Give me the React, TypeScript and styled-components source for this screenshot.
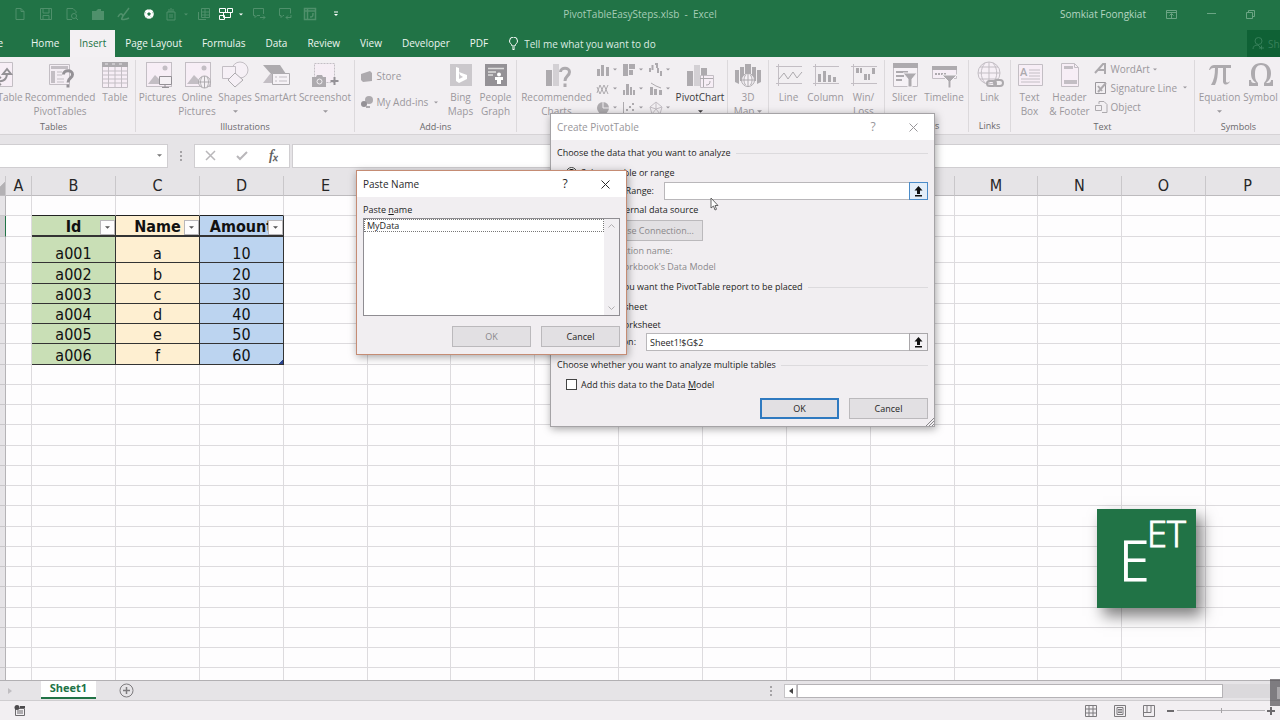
import React, { ReactNode } from 'react';
import styled, { createGlobalStyle, css } from 'styled-components';

const GREEN = '#217346';
const UI = "'Open Sans', 'Noto Sans', sans-serif";
const CELL = "'DejaVu Sans Condensed', 'DejaVu Sans', sans-serif";
const L = '#c3bec4';
const M = '#adaaae';
const D = '#949196';

const Global = createGlobalStyle`
  * { box-sizing: border-box; }
  body { margin: 0; background: #fff; font: 10px/14px ${UI}; color: #262626; overflow: hidden; }
  button, input { font: inherit; color: inherit; border: 0; margin: 0; padding: 0; background: none; }
  button { cursor: default; }
  svg { display: block; flex: none; }
`;

const Window = styled.div`
  position: relative;
  display: flex;
  flex-direction: column;
  height: 100vh;
  overflow: hidden;
`;

/* ---------- title bar and tabs ---------- */

const TitleBar = styled.header`
  display: grid;
  grid-template-columns: 1fr auto 1fr;
  align-items: center;
  height: 30px;
  padding-bottom: 2px;
  background: ${GREEN};
  color: #a6cdb6;
`;

const QuickAccess = styled.div`
  display: flex;
  padding-left: 7px;
`;

const QuickButton = styled.button<{ $w: number; $bright?: boolean }>`
  display: flex;
  justify-content: center;
  align-items: center;
  width: ${(p) => p.$w}px;
  height: 20px;
  color: ${(p) => (p.$bright ? '#fff' : '#4f906b')};
`;

const WindowTools = styled.div`
  display: flex;
  justify-content: flex-end;
  align-items: center;
  gap: 30px;
  padding-right: 25px;
  color: #6ba584;
`;

const UserName = styled.span`
  color: #b4d6c2;
  margin-right: -10px;
`;

const TabStrip = styled.nav`
  display: flex;
  height: 27px;
  background: ${GREEN};
  color: #eef6f1;
`;

const Tab = styled.button<{ $active?: boolean }>`
  padding: 0 10px 2px;
  height: 27px;
  ${(p) => p.$active && css`
    margin-left: 1px;
    padding: 0 9px 2px;
    background: #f3f0f3;
    color: ${GREEN};
  `}
`;

const FileTab = styled.button`
  display: flex;
  justify-content: flex-end;
  align-items: center;
  width: 21px;
  padding: 0 18px 2px 0;
  overflow: hidden;
`;

const TellMe = styled.label`
  display: flex;
  align-items: center;
  gap: 6px;
  margin-left: 11px;
  flex: 1;
  input { width: 160px; }
  input::placeholder { color: #dcebe2; opacity: 1; }
`;

const Share = styled.button`
  display: flex;
  align-items: center;
  gap: 4px;
  width: 33px;
  padding-left: 5px;
  overflow: hidden;
  background: #0f6135;
  color: #37805a;
`;

/* ---------- ribbon ---------- */

const Ribbon = styled.section`
  display: flex;
  height: 78px;
  margin-left: -28px;
  background: #f2eff2;
  border-bottom: 1px solid #d6d3d6;
  overflow: hidden;
  color: #9b989d;
`;

const Group = styled.div<{ $w: number }>`
  display: flex;
  flex-direction: column;
  flex: none;
  width: ${(p) => p.$w}px;
  margin: 3px 0 2px;
  border-right: 1px solid #dcd9dc;
`;

const GroupItems = styled.div`
  display: flex;
  justify-content: center;
  height: 60px;
`;

const GroupName = styled.div`
  padding-top: 2px;
  font-size: 9px;
  line-height: 13px;
  text-align: center;
  color: #6b696c;
`;

const Big = styled.button<{ $w: number; $dark?: boolean }>`
  display: flex;
  flex-direction: column;
  align-items: center;
  flex: none;
  width: ${(p) => p.$w}px;
  line-height: 14px;
  white-space: nowrap;
  svg { margin: 1px 0; }
  color: ${(p) => (p.$dark ? '#3b3a3c' : 'inherit')};
`;

const CaretLine = styled.span`
  display: flex;
  align-items: center;
  gap: 3px;
  height: 14px;
  svg { margin: 0; }
`;

const Stack = styled.div<{ $w: number; $top: number }>`
  display: flex;
  flex-direction: column;
  flex: none;
  width: ${(p) => p.$w}px;
  padding: ${(p) => p.$top}px 0 0 2px;
`;

const Small = styled.button<{ $h: number }>`
  display: flex;
  align-items: center;
  gap: 3px;
  height: ${(p) => p.$h}px;
  white-space: nowrap;
`;

const ChartGrid = styled.div`
  display: grid;
  grid-template-columns: 26px 27px 26px;
  grid-auto-rows: 19px;
  padding-left: 2px;
`;

const MiniButton = styled.button`
  display: flex;
  align-items: center;
  gap: 3px;
`;

/* ---------- formula bar ---------- */

const FormulaBar = styled.section`
  display: flex;
  align-items: center;
  height: 41px;
  background: #e6e4e7;
`;

const NameBox = styled.div`
  display: flex;
  align-items: center;
  width: 168px;
  height: 24px;
  background: #fff;
  border: 1px solid #d0ced1;
  border-left: 0;
  input { flex: 1; min-width: 0; outline: 0; }
  button { width: 16px; display: flex; justify-content: center; color: #777; }
`;

const Grip = styled.div`
  display: flex;
  justify-content: center;
  width: 26px;
`;

const FormulaButtons = styled.div`
  display: flex;
  width: 96px;
  height: 24px;
  background: #fff;
  border: 1px solid #d0ced1;
  button { flex: 1; display: flex; justify-content: center; align-items: center; }
`;

const FormulaInput = styled.input`
  flex: 1;
  height: 24px;
  margin-left: 2px;
  background: #fff;
  border: 1px solid #d0ced1;
  border-right: 0;
`;

/* ---------- sheet ---------- */

const SheetArea = styled.main`
  flex: 1;
  min-height: 0;
  overflow: hidden;
  background: #fefdfe;
`;

const Sheet = styled.table`
  width: 1290px;
  table-layout: fixed;
  border-collapse: separate;
  border-spacing: 0;
  font: 16px/18px ${CELL};
  color: #111;
`;

const Col = styled.col<{ $w: number }>`
  width: ${(p) => p.$w}px;
`;

const ColumnName = styled.th`
  height: 20px;
  padding: 1px 0 0;
  font-weight: 400;
  color: #262626;
  background: #e6e4e7;
  border-right: 1px solid #c9c7ca;
  border-bottom: 1px solid #bdbbbe;
`;

const Corner = styled(ColumnName)`
  background: linear-gradient(135deg, #e6e4e7 45%, #b3b1b4 46%);
`;

const RowHead = styled.th<{ $selected?: boolean }>`
  padding: 0;
  background: ${(p) => (p.$selected ? '#d2d0d3' : '#e6e4e7')};
  border-right: 1px solid ${(p) => (p.$selected ? GREEN : '#b5b3b6')};
  border-bottom: 1px solid #c9c7ca;
`;

const Row = styled.tr<{ $h: number }>`
  height: ${(p) => p.$h}px;
`;

const Cell = styled.td<{ $fill?: string; $header?: boolean; $above?: boolean }>`
  position: relative;
  padding: 0;
  text-align: center;
  vertical-align: bottom;
  white-space: nowrap;
  overflow: hidden;
  line-height: 17px;
  border-right: 1px solid #dddbde;
  border-bottom: 1px solid #dddbde;
  ${(p) => p.$above && css`border-bottom-color: #222;`}
  ${(p) => p.$fill && css`
    background: ${p.$fill};
    border-right-color: #333;
    border-bottom-color: #333;
  `}
  ${(p) => p.$header && css`
    padding-top: 2px;
    font-weight: 700;
    vertical-align: middle;
    border-bottom: 2px solid #333;
  `}
`;

const FilterButton = styled.button`
  position: absolute;
  right: 0;
  bottom: 0;
  display: flex;
  justify-content: center;
  align-items: center;
  width: 15px;
  height: 15px;
  background: #fdfcfd;
  border: 1px solid #b9b7ba;
  color: #555;
`;

const RangeHandle = styled.i`
  position: absolute;
  right: 0;
  bottom: 0;
  width: 4px;
  height: 4px;
  background: linear-gradient(135deg, transparent 45%, #2b4590 46%);
`;

/* ---------- bottom bars ---------- */

const SheetTabs = styled.div`
  display: flex;
  align-items: center;
  height: 21px;
  background: #e6e4e7;
  border-top: 1px solid #b2b0b3;
  border-bottom: 1px solid #cfcdd0;
`;

const Arrow = styled.button`
  width: 41px;
  padding-left: 8px;
  color: #c0bec1;
`;

const SheetTab = styled.button`
  align-self: flex-start;
  width: 55px;
  height: 18px;
  padding-bottom: 3px;
  background: #fff;
  border-bottom: 2px solid ${GREEN};
  font-size: 11px;
  line-height: 13px;
  font-weight: 700;
  color: ${GREEN};
`;

const AddSheet = styled.button`
  margin-left: 23px;
  flex: 1;
`;

const ScrollBar = styled.div`
  display: flex;
  align-items: center;
  width: 486px;
  height: 14px;
  background: #dbd9dc;
`;

const ScrollLeft = styled.button`
  display: flex;
  justify-content: center;
  align-items: center;
  width: 13px;
  height: 14px;
  background: #fff;
  border: 1px solid #c5c3c6;
`;

const ScrollThumb = styled.div`
  width: 426px;
  height: 14px;
  background: #fff;
  border: 1px solid #b5b3b6;
`;

const TabsEnd = styled.div`
  width: 10px;
`;

const StatusBar = styled.footer`
  display: flex;
  align-items: center;
  height: 19px;
  padding: 0 5px 0 14px;
  background: #f2eff2;
`;

const Spacer = styled.div`
  flex: 1;
`;

const Views = styled.div`
  display: flex;
  gap: 17px;
  margin-right: 12px;
`;

const ZoomRange = styled.input`
  appearance: none;
  width: 88px;
  height: 11px;
  margin: 0 2px;
  background:
    linear-gradient(#a5a3a6, #a5a3a6) center / 1px 5px no-repeat,
    linear-gradient(#b5b3b6, #b5b3b6) center / 100% 1px no-repeat;
  &::-webkit-slider-thumb { appearance: none; width: 1px; height: 5px; }
`;

/* ---------- dialogs ---------- */

const DialogBox = styled.section<{ $active?: boolean }>`
  position: absolute;
  background: #f1eef1;
  border: 1px solid ${(p) => (p.$active ? '#c58c74' : '#a5a3a6')};
  box-shadow: 1px 2px 8px rgba(0, 0, 0, 0.35);
  font-size: 9px;
  line-height: 12px;
  color: #1e1e1e;
`;

const CreateDialog = styled(DialogBox)`
  left: 550px;
  top: 113px;
  width: 385px;
`;

const PasteDialog = styled(DialogBox)`
  left: 356px;
  top: 170px;
  width: 271px;
`;

const DialogTitle = styled.header<{ $muted?: boolean }>`
  display: flex;
  align-items: center;
  height: 26px;
  padding: 0 1px 0 6px;
  background: #fff;
  font-size: 10px;
  color: ${(p) => (p.$muted ? '#98969a' : '#2a2a2a')};
  h2 { flex: 1; margin: 0; font-size: 10px; font-weight: 400; }
`;

const TitleButton = styled.button`
  display: flex;
  justify-content: center;
  width: 40px;
  font-size: 12px;
`;

const CreateBody = styled.form`
  padding: 3px 6px 7px;
`;

const Section = styled.div<{ $gap?: number }>`
  display: flex;
  align-items: center;
  gap: 5px;
  height: 20px;
  margin-top: ${(p) => p.$gap || 0}px;
  white-space: nowrap;
  &::after { content: ''; flex: 1; height: 1px; background: #dcdadd; }
`;

const Choice = styled.label<{ $h: number; $muted?: boolean }>`
  display: flex;
  align-items: center;
  gap: 4px;
  height: ${(p) => p.$h}px;
  padding-left: 9px;
  color: ${(p) => (p.$muted ? '#8a888b' : 'inherit')};
`;

const Radio = styled.input`
  appearance: none;
  width: 11px;
  height: 11px;
  border: 1px solid #444;
  border-radius: 50%;
  background: #fff;
  &:checked { background: radial-gradient(#111 3px, #fff 4px); }
`;

const Check = styled.input`
  appearance: none;
  width: 11px;
  height: 11px;
  border: 1px solid #444;
  background: #fff;
`;

const Field = styled.div<{ $label: number }>`
  display: flex;
  align-items: center;
  height: 18px;
  label { width: ${(p) => p.$label}px; text-align: right; }
  input {
    flex: 1;
    min-width: 0;
    height: 18px;
    margin-left: 10px;
    padding-left: 3px;
    background: #fff;
    border: 1px solid #b9b7ba;
    border-right: 0;
    outline: 0;
  }
`;

const PickButton = styled.button<{ $focus?: boolean }>`
  display: flex;
  justify-content: center;
  align-items: center;
  width: 19px;
  height: 18px;
  background: ${(p) => (p.$focus ? '#e3eef9' : '#f3f1f4')};
  border: 1px solid ${(p) => (p.$focus ? '#4b8cc9' : '#a9a7aa')};
`;

const PushButton = styled.button<{ $primary?: boolean; $w?: number }>`
  width: ${(p) => p.$w || 79}px;
  height: 21px;
  background: #e2e0e3;
  border: ${(p) => (p.$primary ? '2px solid #2f7ac0' : '1px solid #bbb9bc')};
  &:disabled { color: #8a888b; }
`;

const ConnectionRow = styled.div`
  display: flex;
  padding: 0 0 0 39px;
`;

const ConnectionName = styled.div`
  height: 17px;
  padding: 4px 0 0 39px;
  color: #8a888b;
`;

const Actions = styled.div<{ $gap: number }>`
  display: flex;
  justify-content: flex-end;
  gap: 10px;
  margin-top: ${(p) => p.$gap}px;
`;

const Resize = styled.svg`
  position: absolute;
  right: 0;
  bottom: 0;
`;

const PasteBody = styled.div`
  padding: 7px 6px;
`;

const ListBox = styled.div`
  display: flex;
  height: 98px;
  margin-top: 2px;
  background: #fff;
  border: 1px solid #8f8d92;
`;

const Options = styled.ul`
  flex: 1;
  margin: 0;
  padding: 0;
  list-style: none;
  li { height: 13px; padding-left: 2px; line-height: 11px; border: 1px dotted #777; }
`;

const ListScroll = styled.div`
  display: flex;
  flex-direction: column;
  justify-content: space-between;
  align-items: center;
  width: 15px;
  padding: 5px 0;
  background: #f1eff2;
`;

/* ---------- overlays ---------- */

const Pointer = styled.svg`
  position: absolute;
  left: 710px;
  top: 197px;
`;

const Logo = styled.svg`
  position: absolute;
  right: 84px;
  bottom: 112px;
  background: ${GREEN};
  box-shadow: 6px 8px 14px rgba(0, 0, 0, 0.5);
`;

const Handle = styled.div`
  position: absolute;
  right: 0;
  bottom: 14px;
  width: 10px;
  height: 27px;
  background: rgba(70, 68, 72, 0.65);
  &::after { content: ''; position: absolute; right: 0; top: 8px; width: 3px; height: 12px; background: #aaa8ab; }
`;

/* ---------- icons ---------- */

const Caret = ({ w = 5 }: { w?: number }) => (
  <svg width={w} height="3" viewBox="0 0 6 3"><path d="M0 0h6L3 3z" fill="currentColor" /></svg>
);

const Icon = ({ children, s = 14 }: { children: ReactNode; s?: number }) => (
  <svg width={s} height={s} viewBox={`0 0 ${s} ${s}`} fill="none" stroke="currentColor">{children}</svg>
);

const Art = ({ children }: { children: ReactNode }) => (
  <svg width="28" height="28" viewBox="0 0 28 28" fill="none" stroke={L}>{children}</svg>
);

const Cross = ({ s = 9 }: { s?: number }) => (
  <svg width={s} height={s} viewBox="0 0 9 9"><path d="M.5.5l8 8M8.500.5l-8 8" stroke="currentColor" /></svg>
);

const UpArrow = () => (
  <svg width="9" height="11" viewBox="0 0 9 11"><path d="M4.500 0L8.500 4.500H6V8H3V4.500H.5zM1 9h7v1.500H1z" fill="#111" /></svg>
);

const Photo = () => (
  <>
    <rect x="2.500" y="1.500" width="25" height="24" fill="#f7eef6" />
    <circle cx="21" cy="7" r="2.500" fill={L} stroke="none" />
    <path d="M4 23l7-9 4 4 4 5z" fill={L} stroke="none" />
  </>
);

const ART: Record<string, ReactNode> = {
  pivot: <><path d="M4 1.500h23.500v24H4z" fill="#f7eef6" /><path d="M12 20c7 1 10-2 10-8M22 8l-4 5h8zM16 16l-5 4 5 4" stroke={D} strokeWidth="2" /></>,
  recPivot: <>
    <path d="M3.500 3.500h20v20h-20z" fill="#f4eef4" /><path d="M5 5h17v3H5zM5 10h4v12H5z" fill={L} stroke="none" />
    <path d="M11 11h5M11 14h5M11 18h7M11 21h7" /><path d="M17.500 13.500c0-5 9-5 9 0 0 4-4.500 3-4.500 8M22 23.500v3" stroke={D} strokeWidth="3" />
  </>,
  table: <>
    <path d="M1.500 1.500h25v25h-25z" fill="#f7eef6" /><path d="M1 1h26v5H1z" fill={M} stroke="none" />
    <path d="M4 3h3M11 3h3M18 3h3" stroke="#e9e6ea" /><path d="M1.500 10h25M1.500 14h25M1.500 18h25M1.500 22h25M7.500 6v20M14 6v20M20.500 6v20" />
  </>,
  pictures: <><Photo /><path d="M15.500 15.500h12v8h-12z" fill="#f4f0f4" stroke={D} /><path d="M21 24v2M18 26.500h7" stroke={D} /></>,
  online: <><Photo /><circle cx="21.500" cy="21" r="6" fill="#f4f0f4" stroke={M} /><path d="M21.500 15v12M15.500 21h12M19 16c-2 3-2 7 0 10M24 16c2 3 2 7 0 10" stroke={M} /></>,
  shapes: <><circle cx="19" cy="9" r="8" fill="#f6f0f6" /><path d="M1.500 5.500h13v12h-13z" fill="#f6f0f6" /><path d="M14 12l8 7-8 7-7-7z" fill="#f6f0f6" stroke={M} /></>,
  smart: <><path d="M1 4h17l6 9H9z" fill={M} stroke="none" /><path d="M8 13h6v9H1z" fill={L} stroke="none" /><path d="M10.500 12.500h17v11h-17z" fill="#f6f2f6" stroke={M} /><path d="M13 16h2M17 16h8M13 20h2M17 20h8" /></>,
  shot: <>
    <path d="M3.500 2.500h20v19h-20z" fill="#f6eef5" strokeDasharray="2 1" /><path d="M1 16h4l1-2h5l1 2h3v10H1z" fill={M} stroke="none" /><circle cx="8.500" cy="20.500" r="2.500" stroke="#f2eff2" />
    <path d="M23.500 16v8M19.500 20h8" stroke={D} strokeWidth="2" />
  </>,
  bing: <><path d="M3 3h22v22H3z" fill="#cbc8cc" stroke="none" /><path d="M9 6l3 1v11l4-2-3-2-1-3 8 3v4l-8 4-3-2z" fill="#fff" stroke="none" /></>,
  people: <><path d="M3 3h22v22H3z" fill={D} stroke="none" /><path d="M6 7.500h16M6 11h8M6 14h5" stroke="#ddd" strokeWidth="1.500" /><circle cx="17" cy="13.500" r="2" fill="#fff" stroke="none" /><path d="M13 16h8v3h-2v4h-4v-4h-2z" fill="#fff" stroke="none" /></>,
  recCharts: <>
    <path d="M3 9h6v16H3z" fill={M} stroke="none" /><path d="M10 3h6v22h-6z" fill="#d3d0d4" stroke="none" />
    <path d="M17.500 11c0-5 9-5 9 0 0 4-4.500 4-4.500 9M22 22.500v3.500" stroke={M} strokeWidth="3" />
  </>,
  pivotChart: <>
    <path d="M1 10h6v15H1z" fill={M} stroke="none" /><path d="M8 4h6v21H8z" fill="#d3d0d4" stroke="none" /><path d="M15 7h6v8h-6z" fill={M} stroke="none" />
    <path d="M14.500 14.500h13v12h-13z" fill="#f7eef6" /><path d="M14 17.500h13M17.500 14v12M20 24c3 0 4-1 4-4" stroke={M} />
  </>,
  map: <>
    <path d="M1 9h4v14l-4-2zM6 6h4v14H6zM11 3h6v12h-6zM18 6h4v14h-4zM23 9h4v12l-4 2z" fill={M} stroke="none" />
    <circle cx="14" cy="19" r="6.500" fill="#f6f2f6" stroke={M} /><path d="M14 13v13M8 19h12M11.500 14c-2 3-2 7 0 10M16.500 14c2 3 2 7 0 10" stroke={M} />
  </>,
  line: <><path d="M3.500 3v22M1 5.500h26M1 22.500h26" /><path d="M4 18l5-6 4 6 5-7 4 6 5-6" stroke={M} /></>,
  column: <><path d="M3.500 3v22M1 5.500h26M1 22.500h26" /><path d="M6 13h3v8H6zM11 10h3v11h-3zM16 14h3v7h-3zM21 16h3v5h-3z" fill={M} stroke="none" /></>,
  win: <><path d="M3.500 3v22M1 5.500h26M1 22.500h26" /><path d="M6 7h3v5H6zM10 7h2v5h-2zM14 13h3v6h-3zM18 13h2v6h-2zM22 7h3v6h-3z" fill={M} stroke="none" /></>,
  slicer: <>
    <path d="M2.500 2.500h24v23h-24z" fill="#f6f2f6" /><path d="M2 2h25v5H2z" fill={M} stroke="none" /><path d="M5 11h12M5 15h8M5 19h6" stroke={M} strokeWidth="2" />
    <path d="M12 12h14l-5 6v8h-4v-8z" fill={M} stroke="#f6f2f6" />
  </>,
  timeline: <>
    <path d="M2.500 5.500h24v12h-24z" fill="#f6eef6" /><path d="M2 5h25v4H2z" fill={M} stroke="none" /><path d="M5 13h11" strokeWidth="2" strokeDasharray="2 1" stroke={M} />
    <path d="M12 14h15l-6 6v7h-3v-7z" fill={M} stroke="#f6f2f6" />
  </>,
  link: <>
    <circle cx="13" cy="12" r="11" fill="#f6f0f6" /><path d="M13 1v22M2 12h22M4 6h18M4 18h18M9 2c-5 6-5 14 0 20M17 2c5 6 5 14 0 20" />
    <rect x="11" y="20" width="9" height="5" rx="2.500" stroke={M} strokeWidth="2" /><rect x="18" y="19" width="9" height="6" rx="3" stroke={M} strokeWidth="2" />
  </>,
  textBox: <><path d="M2.500 3.500h24v21h-24z" fill="#f7eef6" /><path d="M13 9h11M13 12h11M13 15h11M5 18h19M5 21h19" /><text x="4" y="15" fontSize="11" fontWeight="600" fill={M} stroke="none">A</text></>,
  header: <><path d="M5.500 2.500h13l4 4v19h-17z" fill="#f7eef6" /><path d="M8 5h9v3H8zM8 19h13v4H8z" fill={L} stroke="none" /><path d="M18.500 2.500v4h4" /></>,
  pi: <path d="M3 9c1-4 3-5 6-5h16v3h-5v13c0 2 2 2 4 0-1 4-6 5-7 1V7h-5c0 7-1 13-3 17H5c3-5 4-10 4-17-2 0-4 0-5 2z" fill={M} stroke="none" />,
  omega: <path d="M2 25v-6h2c0 2 1 3 3 3h2C5 19 4 16 4 12 4 6 8 2 14 2s10 4 10 10c0 4-1 7-5 10h2c2 0 3-1 3-3h2v6h-9v-3c3-3 3-6 3-10 0-5-2-8-6-8s-6 3-6 8c0 4 0 7 3 10v3z" fill={M} stroke="none" />,
};

const MINI: ReactNode[] = [
  <path d="M1 6h3v7H1zM5 2h3v11H5zM10 4h3v9h-3z" fill={M} stroke="none" />,
  <path d="M1 1h5v12H1zM7 1h6v5H7zM7 7h4v5H7z" fill={M} stroke="none" />,
  <path d="M1 5v4M3.500 2v5M6 1h2v4M9 5v5M12 8v5" stroke={M} strokeWidth="2" />,
  <path d="M1 11l3-8 4 9 4-9M1 5l3 7 4-9 4 9" stroke={M} />,
  <path d="M1 8h2v5H1zM4 2h3v11H4zM8 5h2v8H8zM11 8h2v5h-2z" fill={M} stroke="none" />,
  <><path d="M1 5h3v8H1zM5 7h3v6H5zM10 8h3v5h-3z" fill={M} stroke="none" /><path d="M2 1l5 3 5 2" stroke={M} /></>,
  <><circle cx="7" cy="7" r="6" fill={M} stroke="none" /><path d="M7 7V1M7 7h6" stroke="#f2eff2" /></>,
  <><path d="M1.500 1v11.500H13" stroke={M} /><path d="M4 8h2v2H4zM7 5h2v2H7zM10 8h2v2h-2zM10 2h2v2h-2z" fill={M} stroke="none" /></>,
  <path d="M7 1l6 5-2 7H3L1 6zM7 1v7M1 6l6 2 6-2M3 13l4-5 4 5" stroke={L} />,
];

/* ---------- data ---------- */

const TABS = ['Home', 'Insert', 'Page Layout', 'Formulas', 'Data', 'Review', 'View', 'Developer', 'PDF'];

type Item = { art: string; w: number; a: string; b?: string; caret?: boolean; dark?: boolean };

const BigItem = ({ art, w, a, b, caret, dark }: Item) => (
  <Big type="button" $w={w} $dark={dark}>
    <Art>{ART[art]}</Art>
    <span>{a}</span>
    {(b || caret) && <CaretLine>{b}{caret && <Caret />}</CaretLine>}
  </Big>
);

const FILLS = ['#c9dfb6', '#feefd1', '#bcd4f0'];
const HEADINGS = ['Id', 'Name', 'Amount'];
const RECORDS = [
  ['a001', 'a', '10'],
  ['a002', 'b', '20'],
  ['a003', 'c', '30'],
  ['a004', 'd', '40'],
  ['a005', 'e', '50'],
  ['a006', 'f', '60'],
];
const COLUMNS = 'ABCDEFGHIJKLMNOP'.split('');
const ROWS = Array.from({ length: 26 }, (_, i) => i + 1);

const colWidth = (i: number) => (i === 0 ? 26 : i % 7 === 5 ? 83 : 84);
const rowHeight = (n: number) => (n === 2 || n % 4 === 0 ? 21 : n === 3 ? 26 : 20);

const QUICK: { w: number; bright?: boolean; label: string; icon: ReactNode }[] = [
  { w: 26, label: 'New', icon: <Icon><path d="M3 1.500h5l3 3v8H3zM8 1.500v3h3" /></Icon> },
  { w: 26, label: 'Save', icon: <Icon><path d="M1.500 1.500h11v11h-11zM4 2v4h6V2M4 12V8.500h6V12" /></Icon> },
  { w: 26, label: 'Print Preview', icon: <Icon><path d="M7 12.500H2v-11h6l3 3V6" /><circle cx="9" cy="9" r="2.500" /><path d="M11 11l2 2" /></Icon> },
  { w: 26, label: 'Open', icon: <Icon><path d="M1 4h4l2-2h3v2h3v9H1z" fill="currentColor" stroke="none" /></Icon> },
  { w: 26, label: 'Draw', icon: <Icon><path d="M1 10c3-6 6-2 4 1s5 1 7 0M6 9l6-8" strokeWidth="1.500" /></Icon> },
  { w: 24, label: 'Format', bright: true, icon: <Icon s={10}><circle cx="5" cy="5" r="4.800" fill="currentColor" stroke="none" /><path d="M5 3.500l1.500 1-.6 1.800H4.100l-.6-1.800zM5 0v1.200M.8 3.500l1 .4M9.200 3.500l-1 .4M2.500 8.500l.7-.9M7.500 8.500l-.7-.9" stroke={GREEN} fill={GREEN} strokeWidth=".5" /></Icon> },
  { w: 20, label: 'Touch Mode', icon: <Icon><path d="M3 5h8v8H3zM5 5V2M7 5V1M9 5V2M5 8h4M5 10h4" /></Icon> },
  { w: 10, label: 'More', icon: <Caret w={4} /> },
  { w: 26, label: 'Pivot', icon: <Icon><path d="M1.500 5v7.500H9M4.500 1.500h8v9h-8zM5 5h7M8 2v8M5 8h7" /></Icon> },
  { w: 18, label: 'Arrange', bright: true, icon: <Icon><path d="M.5 1.500h6v4h-6zM8.500 1.500h5v4h-5zM.5 8.500h5v4h-5zM4.500 5.500h7v5h-7z" /></Icon> },
  { w: 12, label: 'Arrange options', bright: true, icon: <Caret w={4} /> },
  { w: 24, label: 'Next Comment', icon: <Icon><path d="M8 8.500H5l-2 2v-2H1.500v-7h10V7M8 10.500h5M11 8.500l2 2-2 2" /></Icon> },
  { w: 28, label: 'Previous Comment', icon: <Icon><path d="M6 8.500H5l-2 2v-2H1.500v-7h11v5M13 8v2.500H8M10 8.500l-2 2 2 2" /></Icon> },
  { w: 22, label: 'PivotTable', icon: <Icon><path d="M1.500 1.500h11v11h-11zM2 4h10M4.500 2v10M7 10c3 0 3-1 3-4" strokeWidth="1.500" /></Icon> },
  { w: 30, label: 'Customize', bright: true, icon: <Icon s={6}><path d="M1 1h4" strokeWidth="1" /><path d="M1 3h4L3 5z" fill="currentColor" stroke="none" /></Icon> },
];

const TopBars = () => (
  <>
    <TitleBar>
      <QuickAccess>
        {QUICK.map((q) => (
          <QuickButton key={q.label} type="button" aria-label={q.label} $w={q.w} $bright={q.bright}>{q.icon}</QuickButton>
        ))}
      </QuickAccess>
      <span>PivotTableEasySteps.xlsb &nbsp;-&nbsp; Excel</span>
      <WindowTools>
        <UserName>Somkiat Foongkiat</UserName>
        <svg width="11" height="9" viewBox="0 0 11 9" fill="none" stroke="currentColor"><path d="M.5.500h10v8H.5zM.5 2.500h10M5.500 8V4M3.500 5.500l2-2 2 2" /></svg>
        <svg width="9" height="9" viewBox="0 0 9 9"><path d="M0 3.500h9" stroke="currentColor" /></svg>
        <svg width="9" height="9" viewBox="0 0 9 9" fill="none" stroke="currentColor"><path d="M.5 2.500h6v6h-6zM2.500 2V.5h6v6H7" /></svg>
      </WindowTools>
    </TitleBar>
    <TabStrip>
      <FileTab type="button">File</FileTab>
      {TABS.map((t) => <Tab key={t} type="button" $active={t === 'Insert'}>{t}</Tab>)}
      <TellMe>
        <svg width="9" height="13" viewBox="0 0 9 13" fill="none" stroke="#fff"><path d="M3 9C3 7 .5 6.500.5 4a4 4 0 018 0C8.500 6.500 6 7 6 9zM3 11h3M3.500 12.500h2" /></svg>
        <input aria-label="Tell me what you want to do" placeholder="Tell me what you want to do" />
      </TellMe>
      <Share type="button">
        <svg width="12" height="13" viewBox="0 0 12 13" fill="none" stroke="currentColor"><circle cx="6.500" cy="4" r="3.500" /><path d="M1 12c0-3 2-4 5-4l3 3M7 11h5M9.500 8.500v4" /></svg>
        Share
      </Share>
    </TabStrip>
  </>
);

const InsertRibbon = () => (
  <Ribbon>
    <Group $w={164}>
      <GroupItems>
        <BigItem art="pivot" w={49} a="PivotTable" />
        <BigItem art="recPivot" w={74} a="Recommended" b="PivotTables" />
        <BigItem art="table" w={36} a="Table" />
      </GroupItems>
      <GroupName>Tables</GroupName>
    </Group>
    <Group $w={219}>
      <GroupItems>
        <BigItem art="pictures" w={38} a="Pictures" />
        <BigItem art="online" w={41} a="Online" b="Pictures" />
        <BigItem art="shapes" w={35} a="Shapes" caret />
        <BigItem art="smart" w={46} a="SmartArt" />
        <BigItem art="shot" w={53} a="Screenshot" caret />
      </GroupItems>
      <GroupName>Illustrations</GroupName>
    </Group>
    <Group $w={162}>
      <GroupItems>
        <Stack $w={86} $top={3}>
          <Small type="button" $h={26}>
            <Icon><path d="M1 5l9-3 2 2v8l-9 1-2-2z" fill={M} stroke="none" /></Icon>Store
          </Small>
          <Small type="button" $h={26}>
            <Icon><circle cx="9" cy="5" r="4" fill={M} stroke="none" /><circle cx="4" cy="9" r="3" fill={D} stroke="none" /><path d="M6 11h4v2H6z" fill={M} stroke="none" /></Icon>My Add-ins&nbsp;<Caret w={4} />
          </Small>
        </Stack>
        <BigItem art="bing" w={34} a="Bing" b="Maps" />
        <BigItem art="people" w={36} a="People" b="Graph" />
      </GroupItems>
      <GroupName>Add-ins</GroupName>
    </Group>
    <Group $w={211}>
      <GroupItems>
        <BigItem art="recCharts" w={75} a="Recommended" b="Charts" />
        <ChartGrid>
          {MINI.map((m, i) => <MiniButton key={i} type="button" aria-label={`Chart type ${i + 1}`}><Icon>{m}</Icon><Caret w={4} /></MiniButton>)}
        </ChartGrid>
        <BigItem art="pivotChart" w={50} a="PivotChart" caret dark />
      </GroupItems>
      <GroupName>Charts</GroupName>
    </Group>
    <Group $w={41}>
      <GroupItems><BigItem art="map" w={38} a="3D" b="Map" caret /></GroupItems>
      <GroupName>Tours</GroupName>
    </Group>
    <Group $w={116}>
      <GroupItems>
        <BigItem art="line" w={34} a="Line" />
        <BigItem art="column" w={40} a="Column" />
        <BigItem art="win" w={36} a="Win/" b="Loss" />
      </GroupItems>
      <GroupName>Sparklines</GroupName>
    </Group>
    <Group $w={84}>
      <GroupItems>
        <BigItem art="slicer" w={35} a="Slicer" />
        <BigItem art="timeline" w={44} a="Timeline" />
      </GroupItems>
      <GroupName>Filters</GroupName>
    </Group>
    <Group $w={42}>
      <GroupItems><BigItem art="link" w={38} a="Link" /></GroupItems>
      <GroupName>Links</GroupName>
    </Group>
    <Group $w={184}>
      <GroupItems>
        <BigItem art="textBox" w={36} a="Text" b="Box" />
        <BigItem art="header" w={44} a="Header" b="& Footer" />
        <Stack $w={102} $top={0}>
          <Small type="button" $h={18}>
            <Icon><path d="M1 11L9 2h2v10M4 8h7" stroke={M} strokeWidth="2" /></Icon>WordArt<Caret w={4} />
          </Small>
          <Small type="button" $h={19}>
            <Icon><path d="M1.500 1.500h10v11h-10z" /><path d="M4 11l8-9M4 5l4 5" stroke={M} strokeWidth="2" /></Icon>Signature Line&nbsp;<Caret w={4} />
          </Small>
          <Small type="button" $h={19}>
            <Icon><path d="M5 4V1.500h5l3 3v8H8" stroke={M} /><path d="M1.500 5.500h6v5h-6z" stroke={M} /></Icon>Object
          </Small>
        </Stack>
      </GroupItems>
      <GroupName>Text</GroupName>
    </Group>
    <Group $w={88}>
      <GroupItems>
        <BigItem art="pi" w={44} a="Equation" caret />
        <BigItem art="omega" w={38} a="Symbol" />
      </GroupItems>
      <GroupName>Symbols</GroupName>
    </Group>
  </Ribbon>
);

const Grid = () => (
  <SheetArea>
    <Sheet>
      <colgroup>
        <Col $w={6} />
        {COLUMNS.map((c, i) => <Col key={c} $w={colWidth(i)} />)}
      </colgroup>
      <thead>
        <tr>
          <Corner />
          {COLUMNS.map((c) => <ColumnName key={c}>{c}</ColumnName>)}
        </tr>
      </thead>
      <tbody>
        {ROWS.map((n) => (
          <Row key={n} $h={rowHeight(n)}>
            <RowHead $selected={n === 2} />
            {COLUMNS.map((c, i) => {
              const k = i - 1;
              const inTable = k >= 0 && k < 3 && n >= 2 && n <= 8;
              if (!inTable) return <Cell key={c} $above={n === 1 && k >= 0 && k < 3} />;
              if (n === 2) {
                return (
                  <Cell key={c} as="th" $fill={FILLS[k]} $header>
                    {HEADINGS[k]}
                    <FilterButton type="button" aria-label={`Filter ${HEADINGS[k]}`}><Caret /></FilterButton>
                  </Cell>
                );
              }
              return (
                <Cell key={c} $fill={FILLS[k]}>
                  {RECORDS[n - 3][k]}
                  {n === 8 && k === 2 && <RangeHandle />}
                </Cell>
              );
            })}
          </Row>
        ))}
      </tbody>
    </Sheet>
  </SheetArea>
);

const CreatePivot = () => (
  <CreateDialog role="dialog" aria-label="Create PivotTable">
    <DialogTitle $muted>
      <h2>Create PivotTable</h2>
      <TitleButton type="button">?</TitleButton>
      <TitleButton type="button" aria-label="Close"><Cross /></TitleButton>
    </DialogTitle>
    <CreateBody>
      <Section>Choose the data that you want to analyze</Section>
      <Choice $h={19}><Radio type="radio" name="source" defaultChecked /><span>Select a table or range</span></Choice>
      <Field $label={97}>
        <label htmlFor="range">Table/Range:</label>
        <input id="range" />
        <PickButton type="button" aria-label="Pick range" $focus><UpArrow /></PickButton>
      </Field>
      <Choice $h={20}><Radio type="radio" name="source" /><span>Use an external data source</span></Choice>
      <ConnectionRow><PushButton type="button" disabled $w={107}>Choose Connection...</PushButton></ConnectionRow>
      <ConnectionName>Connection name:</ConnectionName>
      <Choice $h={17} $muted><Radio type="radio" name="source" disabled /><span>Use this workbook's Data Model</span></Choice>
      <Section $gap={2}>Choose where you want the PivotTable report to be placed</Section>
      <Choice $h={19}><Radio type="radio" name="place" /><span>New Worksheet</span></Choice>
      <Choice $h={17}><Radio type="radio" name="place" defaultChecked /><span>Existing Worksheet</span></Choice>
      <Field $label={79}>
        <label htmlFor="location">Location:</label>
        <input id="location" defaultValue="Sheet1!$G$2" />
        <PickButton type="button" aria-label="Pick location"><UpArrow /></PickButton>
      </Field>
      <Section $gap={4}>Choose whether you want to analyze multiple tables</Section>
      <Choice $h={19}><Check type="checkbox" /><span>Add this data to the Data <u>M</u>odel</span></Choice>
      <Actions $gap={4}>
        <PushButton type="button" $primary>OK</PushButton>
        <PushButton type="button">Cancel</PushButton>
      </Actions>
    </CreateBody>
    <Resize width="9" height="9" viewBox="0 0 9 9" stroke="#8a888b"><path d="M1 9l8-8M4 9l5-5M7 9l2-2" /></Resize>
  </CreateDialog>
);

const PasteName = () => (
  <PasteDialog role="dialog" aria-label="Paste Name" $active>
    <DialogTitle>
      <h2>Paste Name</h2>
      <TitleButton type="button">?</TitleButton>
      <TitleButton type="button" aria-label="Close"><Cross /></TitleButton>
    </DialogTitle>
    <PasteBody>
      <div id="paste-label">Paste <u>n</u>ame</div>
      <ListBox>
        <Options role="listbox" aria-labelledby="paste-label"><li role="option">MyData</li></Options>
        <ListScroll>
          <svg width="7" height="4" viewBox="0 0 7 4" fill="none" stroke="#b0aeb1"><path d="M.5 3.500l3-3 3 3" /></svg>
          <svg width="7" height="4" viewBox="0 0 7 4" fill="none" stroke="#b0aeb1"><path d="M.5.500l3 3 3-3" /></svg>
        </ListScroll>
      </ListBox>
      <Actions $gap={10}>
        <PushButton type="button" disabled>OK</PushButton>
        <PushButton type="button">Cancel</PushButton>
      </Actions>
    </PasteBody>
  </PasteDialog>
);

export default function App() {
  return (
    <Window>
      <Global />
      <TopBars />
      <InsertRibbon />
      <FormulaBar>
        <NameBox>
          <input aria-label="Name box" />
          <button type="button" aria-label="Show names"><Caret /></button>
        </NameBox>
        <Grip><svg width="2" height="10" viewBox="0 0 2 10"><path d="M1 0v10" stroke="#a5a3a6" strokeWidth="2" strokeDasharray="2 2" /></svg></Grip>
        <FormulaButtons>
          <button type="button" aria-label="Cancel entry"><svg width="11" height="11" viewBox="0 0 11 11" stroke="#b9b7ba" strokeWidth="1.500"><path d="M1 1l9 9M10 1l-9 9" /></svg></button>
          <button type="button" aria-label="Enter"><svg width="12" height="10" viewBox="0 0 12 10" fill="none" stroke="#b9b7ba" strokeWidth="2"><path d="M1 5l3 3 7-7" /></svg></button>
          <button type="button" aria-label="Insert function">
            <svg width="13" height="14" viewBox="0 0 13 14" fontFamily="'Liberation Serif', serif" fontStyle="italic" fill="#555" stroke="#555" strokeWidth=".3"><text x="2" y="11" fontSize="15">f</text><text x="6" y="12" fontSize="11">x</text></svg>
          </button>
        </FormulaButtons>
        <FormulaInput aria-label="Formula" />
      </FormulaBar>
      <Grid />
      <SheetTabs>
        <Arrow type="button" aria-label="Next sheet"><svg width="4" height="6" viewBox="0 0 4 6"><path d="M0 0l4 3-4 3z" fill="currentColor" /></svg></Arrow>
        <SheetTab type="button">Sheet1</SheetTab>
        <AddSheet type="button" aria-label="New sheet">
          <svg width="15" height="15" viewBox="0 0 15 15" fill="none" stroke="#7d7b7e"><circle cx="7.500" cy="7.500" r="6.500" /><path d="M7.500 4v7M4 7.500h7" strokeWidth="1.500" /></svg>
        </AddSheet>
        <Grip><svg width="2" height="10" viewBox="0 0 2 10"><path d="M1 0v10" stroke="#a5a3a6" strokeWidth="2" strokeDasharray="2 2" /></svg></Grip>
        <ScrollBar>
          <ScrollLeft type="button" aria-label="Scroll left"><svg width="4" height="6" viewBox="0 0 4 6"><path d="M4 0L0 3l4 3z" fill="#444" /></svg></ScrollLeft>
          <ScrollThumb />
        </ScrollBar>
        <TabsEnd />
      </SheetTabs>
      <StatusBar>
        <svg width="12" height="11" viewBox="0 0 12 11" fill="none" stroke="#6d6b6e"><path d="M1.500 3.500h9v7h-9zM3 6h6M3 8h6" /><circle cx="3" cy="2.500" r="2.500" fill="#4d4b4e" stroke="none" /><path d="M6 1h5v2H6z" fill="#4d4b4e" stroke="none" /></svg>
        <Spacer />
        <Views>
          <svg width="12" height="12" viewBox="0 0 12 12" fill="none" stroke="#7d7b7e"><path d="M.5.500h11v11H.5zM4 0v12M8 0v12M0 4h12M0 8h12" /></svg>
          <svg width="12" height="12" viewBox="0 0 12 12" fill="none" stroke="#7d7b7e"><path d="M.5.500h11v11H.5zM3 2.500h6v7H3zM4 4.500h4M4 6h4M4 7.500h4" /></svg>
          <svg width="12" height="12" viewBox="0 0 12 12" fill="none" stroke="#7d7b7e"><path d="M.5.500h11v11H.5zM4 0v7.500h4V0M.5 7.500H4" /></svg>
        </Views>
        <svg width="8" height="8" viewBox="0 0 8 8"><path d="M0 4h7" stroke="#6d6b6e" strokeWidth="2" /></svg>
        <ZoomRange type="range" aria-label="Zoom" />
        <svg width="8" height="8" viewBox="0 0 8 8"><path d="M0 4h8M4 0v8" stroke="#6d6b6e" strokeWidth="2" /></svg>
      </StatusBar>
      <CreatePivot />
      <PasteName />
      <Pointer width="9" height="14" viewBox="0 0 9 14"><path d="M1 1v10l2.500-2 1.500 4 1.500-.7L5 8.500h3z" fill="#fff" stroke="#555" strokeWidth=".9" /></Pointer>
      <Logo width="99" height="99" viewBox="0 0 99 99" fill="#fff" stroke="#fff" strokeWidth="1" fontFamily="'Open Sans', sans-serif" fontWeight="300">
        <text x="22" y="72" fontSize="55">E</text>
        <text x="50" y="38" fontSize="36">ET</text>
      </Logo>
      <Handle />
    </Window>
  );
}
